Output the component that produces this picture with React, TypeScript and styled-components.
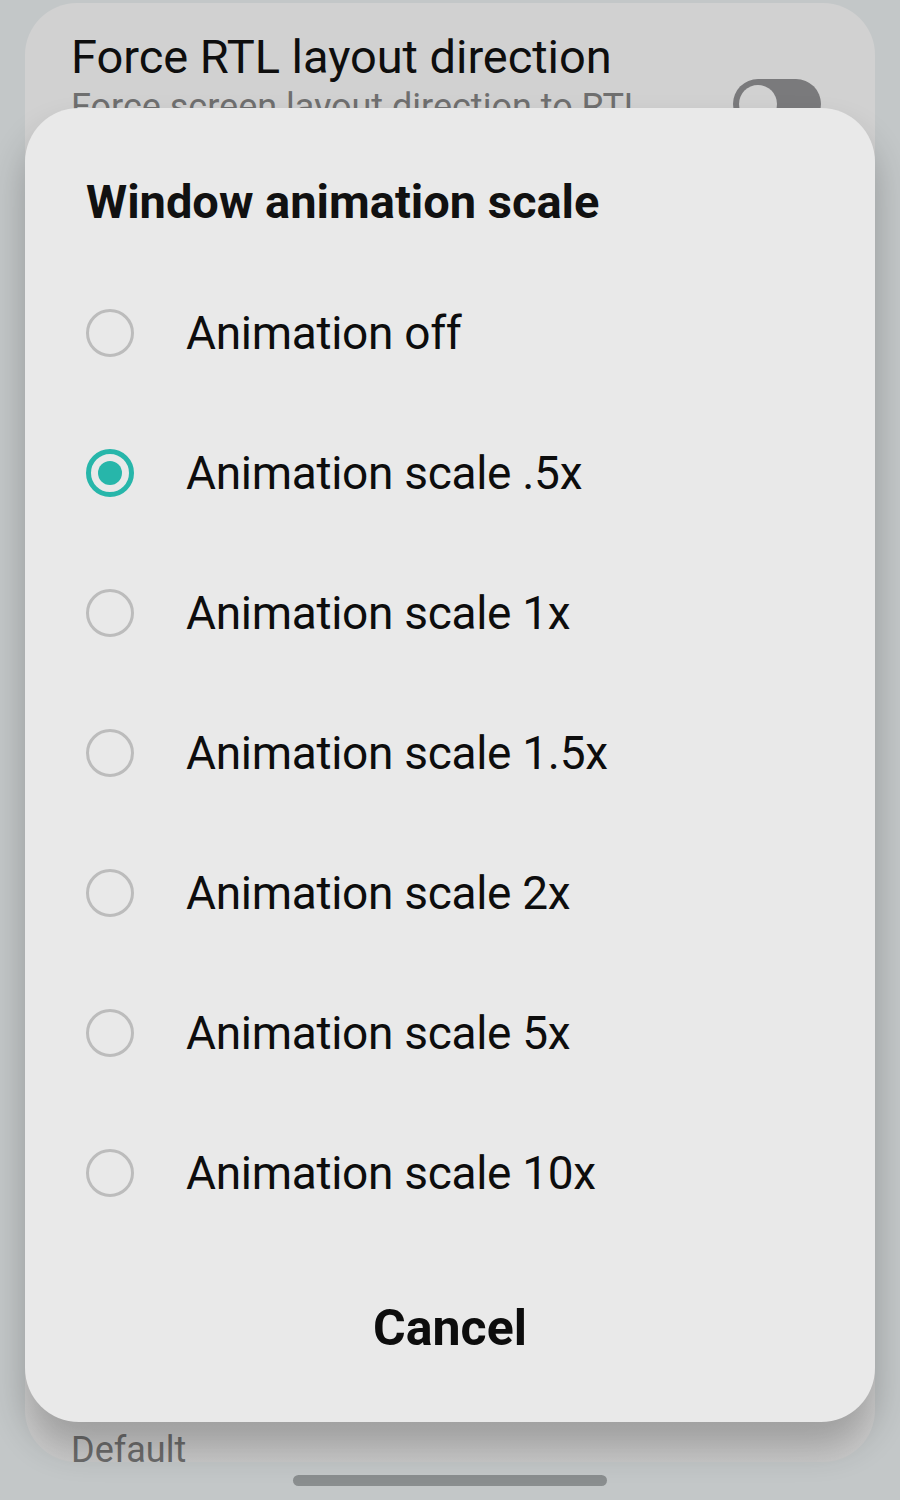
import React from 'react';
import styled, { createGlobalStyle } from 'styled-components';

const GlobalStyle = createGlobalStyle`
  html, body {
    margin: 0;
    padding: 0;
    background: #c3c7c8;
  }
  body {
    font-family: Roboto, "Liberation Sans", sans-serif;
    -webkit-font-smoothing: antialiased;
  }
`;

const Screen = styled.div`
  position: relative;
  width: 900px;
  height: 1500px;
  overflow: hidden;
  background: #c3c7c8;
  display: flex;
  flex-direction: column;
  align-items: center;
`;

const SettingsCard = styled.div`
  margin-top: 3px;
  width: 850px;
  height: 1459px;
  box-sizing: border-box;
  border-radius: 52px;
  background: linear-gradient(#d1d1d1 0, #d1d1d1 1400px, #c9c9c9 1459px);
  padding: 26px 46px 0 46px;
  display: flex;
  flex-direction: column;
  justify-content: space-between;
`;

const SettingRow = styled.div`
  display: flex;
  align-items: flex-start;
  justify-content: space-between;
`;

const SettingText = styled.div`
  display: flex;
  flex-direction: column;
`;

const SettingTitle = styled.div`
  font-size: 47px;
  color: #0e0e0e;
  line-height: 56px;
  letter-spacing: -0.05px;
`;

const SettingSub = styled.div`
  font-size: 36px;
  color: #6f6f6f;
  line-height: 44px;
`;

const Toggle = styled.div`
  margin-top: 50px;
  margin-right: 8px;
  width: 88px;
  height: 50px;
  box-sizing: border-box;
  border-radius: 25px;
  background: #7a7a7c;
  padding: 6px;
  display: flex;
`;

const ToggleKnob = styled.div`
  width: 38px;
  height: 38px;
  border-radius: 50%;
  background: #d1d1d1;
`;

const FooterValue = styled.div`
  font-size: 36px;
  color: #6c6c6c;
  line-height: 24px;
`;

const HomeBar = styled.div`
  margin-top: 13px;
  width: 314px;
  height: 11px;
  border-radius: 6px;
  background: #8a8e8f;
`;

const Dialog = styled.div`
  position: absolute;
  top: 108px;
  left: 25px;
  width: 850px;
  height: 1314px;
  box-sizing: border-box;
  border-radius: 54px;
  background: #e9e9e9;
  box-shadow: 0 24px 36px rgba(0, 0, 0, 0.24);
  padding: 66px 0 0 0;
  display: flex;
  flex-direction: column;
`;

const DialogTitle = styled.div`
  padding-left: 61px;
  font-size: 47px;
  font-weight: 700;
  color: #111;
  line-height: 56px;
`;

const OptionList = styled.div`
  margin-top: 33px;
  display: flex;
  flex-direction: column;
`;

const Option = styled.div`
  height: 140px;
  display: flex;
  align-items: center;
  padding-left: 61px;
`;

const Radio = styled.div<{ $checked?: boolean }>`
  width: 48px;
  height: 48px;
  box-sizing: border-box;
  border-radius: 50%;
  border: ${p => (p.$checked ? '5px solid #27b6aa' : '3px solid #bcbcbc')};
  display: flex;
  align-items: center;
  justify-content: center;
  flex-shrink: 0;
`;

const RadioDot = styled.div`
  width: 24px;
  height: 24px;
  border-radius: 50%;
  background: #27b6aa;
`;

const OptionLabel = styled.div`
  margin-left: 52px;
  font-size: 46px;
  line-height: 56px;
  color: #0d0d0d;
  letter-spacing: -0.3px;
`;

const CancelButton = styled.div`
  margin-top: auto;
  margin-bottom: 64px;
  align-self: center;
  font-size: 50px;
  font-weight: 700;
  line-height: 60px;
  color: #0d0d0d;
`;

const options = [
  'Animation off',
  'Animation scale .5x',
  'Animation scale 1x',
  'Animation scale 1.5x',
  'Animation scale 2x',
  'Animation scale 5x',
  'Animation scale 10x',
];

const App: React.FC = () => {
  const selected = 1;

  return (
    <Screen>
      <GlobalStyle />
      <SettingsCard>
        <SettingRow>
          <SettingText>
            <SettingTitle>Force RTL layout direction</SettingTitle>
            <SettingSub>Force screen layout direction to RTL</SettingSub>
          </SettingText>
          <Toggle>
            <ToggleKnob />
          </Toggle>
        </SettingRow>
        <FooterValue>Default</FooterValue>
      </SettingsCard>
      <HomeBar />
      <Dialog>
        <DialogTitle>Window animation scale</DialogTitle>
        <OptionList>
          {options.map((label, i) => (
            <Option key={label}>
              <Radio $checked={i === selected}>{i === selected && <RadioDot />}</Radio>
              <OptionLabel>{label}</OptionLabel>
            </Option>
          ))}
        </OptionList>
        <CancelButton>Cancel</CancelButton>
      </Dialog>
    </Screen>
  );
};

export default App;
